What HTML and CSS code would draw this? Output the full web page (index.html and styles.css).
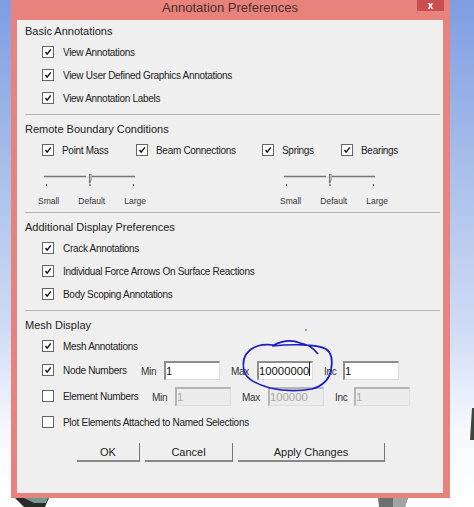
FILE: index.html
```html
<!DOCTYPE html>
<html lang="en">
<head>
    <meta charset="UTF-8">
    <meta name="viewport" content="width=device-width, initial-scale=1.0">
    <title>Annotation Preferences</title>
    <link rel="stylesheet" href="styles.css">
</head>
<body>
    <svg width="0" height="0" class="defs">
        <symbol id="tick" viewBox="0 0 12 12">
            <path d="M3 6 L5 8.6 L9.4 2.8" fill="none" stroke="#111" stroke-width="1.7"/>
        </symbol>
        <symbol id="slider" viewBox="0 0 92 16">
            <path d="M1 2.5 H43 M49 2.5 H92" stroke="#777" stroke-width="1.3"/>
            <path d="M48 0 V6 L47 9 H46.4 V0 Z" fill="#efefef" stroke="#666" stroke-width="0.9"/>
            <path d="M3.5 10 V12 M47 10 V12 M90.5 10 V12" stroke="#333" stroke-width="1"/>
        </symbol>
    </svg>

    <!-- desktop model peeking out from behind the dialog -->
    <svg class="backdrop" width="474" height="507">
        <path d="M15 498 H49 L45 507 H24 Z" fill="#2c2a28"/>
        <path d="M24 498 H48 L46 503 H34 Z" fill="#6f9a94"/>
        <path d="M378 498 H408 L405 507 H379 Z" fill="#6f6f6f"/>
        <path d="M393 498 H408 L405 507 H393 Z" fill="#a3a3a3"/>
        <path d="M472 408 H474 V440 H470 Z" fill="#3a4a38"/>
    </svg>

    <div class="window">
        <div class="titlebar">
            <span class="title">Annotation Preferences</span>
            <button class="close">x</button>
        </div>
        <div class="panel">
            <section class="group basic">
                <h4>Basic Annotations</h4>
                <label class="check"><span class="box"><svg><use href="#tick"/></svg></span>View Annotations</label>
                <label class="check"><span class="box"><svg><use href="#tick"/></svg></span>View User Defined Graphics Annotations</label>
                <label class="check"><span class="box"><svg><use href="#tick"/></svg></span>View Annotation Labels</label>
            </section>

            <section class="group boundary">
                <h4>Remote Boundary Conditions</h4>
                <div class="check-grid">
                    <label class="check"><span class="box"><svg><use href="#tick"/></svg></span>Point Mass</label>
                    <label class="check"><span class="box"><svg><use href="#tick"/></svg></span>Beam Connections</label>
                    <label class="check"><span class="box"><svg><use href="#tick"/></svg></span>Springs</label>
                    <label class="check"><span class="box"><svg><use href="#tick"/></svg></span>Bearings</label>
                </div>
                <div class="sliders">
                    <div class="slider">
                        <svg width="92" height="16"><use href="#slider"/></svg>
                        <div class="slider-labels"><span>Small</span><span>Default</span><span>Large</span></div>
                    </div>
                    <div class="slider second">
                        <svg width="92" height="16"><use href="#slider"/></svg>
                        <div class="slider-labels"><span>Small</span><span>Default</span><span>Large</span></div>
                    </div>
                </div>
            </section>

            <section class="group additional">
                <h4>Additional Display Preferences</h4>
                <label class="check"><span class="box"><svg><use href="#tick"/></svg></span>Crack Annotations</label>
                <label class="check"><span class="box"><svg><use href="#tick"/></svg></span>Individual Force Arrows On Surface Reactions</label>
                <label class="check"><span class="box"><svg><use href="#tick"/></svg></span>Body Scoping Annotations</label>
            </section>

            <section class="group mesh">
                <h4>Mesh Display</h4>
                <label class="check"><span class="box"><svg><use href="#tick"/></svg></span>Mesh Annotations</label>
                <div class="num-row node">
                    <label class="check"><span class="box"><svg><use href="#tick"/></svg></span>Node Numbers</label>
                    <span class="num-label">Min</span><input class="num" value="1">
                    <span class="num-label max">Max</span><input class="num" value="10000000">
                    <span class="num-label inc">Inc</span><input class="num" value="1">
                </div>
                <div class="num-row element">
                    <label class="check"><span class="box"></span>Element Numbers</label>
                    <span class="num-label">Min</span><input class="num" value="1" disabled>
                    <span class="num-label max">Max</span><input class="num" value="100000" disabled>
                    <span class="num-label inc">Inc</span><input class="num" value="1" disabled>
                </div>
                <label class="check plot"><span class="box"></span>Plot Elements Attached to Named Selections</label>
            </section>

            <div class="actions">
                <button class="btn ok">OK</button>
                <button class="btn cancel">Cancel</button>
                <button class="btn apply">Apply Changes</button>
            </div>
        </div>
    </div>

    <!-- hand drawn marker around the max field, plus the text caret inside it -->
    <svg class="marker" width="474" height="507">
        <path d="M309.5 362 V376" stroke="#222" stroke-width="1"/>
        <path d="M318 354 C313 347 306 344 300 343 C293 340 284 340 274 345 C266 344 256 345 250 350 C244 355 242 362 244 371 C247 380 257 384 270 388 C283 391 300 391 312 389 C322 386 329 381 331 370 C333 360 332 353 326 349 C316 344 292 344 272 346" fill="none" stroke="#1a1fc4" stroke-width="1.7"/>
        <circle cx="306" cy="330" r="0.8" fill="#1a1fc4"/>
    </svg>
</body>
</html>
```

FILE: styles.css
```css
html, body {
    height: 507px;
    overflow: hidden;
}
body {
    margin: 0;
    background: linear-gradient(#7f9de2 0, #a9bfea 170px, #cfdcf5 330px, #f6f8fe 430px, #ffffff 507px);
    font-family: "Liberation Sans", Arial, sans-serif;
    font-size: 10px;
    letter-spacing: -0.3px;
    color: #222;
}
.defs {
    position: absolute;
}
.backdrop, .marker {
    position: absolute;
    left: 0;
    top: 0;
}
.window {
    position: absolute;
    left: 11px;
    top: 0;
    width: 439px;
    height: 498px;
    background: #e8827c;
    box-sizing: border-box;
    padding: 0 7px 5px 6px;
    display: flex;
    flex-direction: column;
}
.titlebar {
    height: 20px;
    flex: none;
    display: flex;
    justify-content: center;
    position: relative;
}
.title {
    font-size: 13px;
    line-height: 15px;
    letter-spacing: 0;
    color: #4a2f2d;
}
.close {
    position: absolute;
    right: -1px;
    top: 0;
    width: 27px;
    height: 11px;
    border: none;
    padding: 0;
    background: #c74f4f;
    color: #fff;
    font: bold 10px/10px "Liberation Sans", sans-serif;
}
.panel {
    flex: 1;
    background: #efefef;
    padding: 0 3px 0 8px;
}
.group {
    border-bottom: 1px solid #b4b4b4;
    display: flex;
    flex-direction: column;
}
h4 {
    margin: 0;
    font-size: 11px;
    font-weight: normal;
    line-height: 15px;
    letter-spacing: 0;
    color: #222;
}
.check {
    display: flex;
    align-items: center;
    gap: 9px;
    height: 15px;
    white-space: nowrap;
}
.box {
    width: 12px;
    height: 12px;
    flex: none;
    box-sizing: border-box;
    border: 1px solid #666;
    background: #fff;
    display: block;
    margin-top: -1px;
}
.box svg {
    width: 10px;
    height: 10px;
    display: block;
}

.basic {
    padding-top: 4px;
    height: 95px;
    box-sizing: border-box;
}
.basic .check, .additional .check {
    margin: 0 0 8px 17px;
}
.basic h4, .additional h4 {
    margin-bottom: 6px;
}

.boundary {
    height: 98px;
    box-sizing: border-box;
    padding-top: 7px;
}
.boundary h4 {
    margin-bottom: 6px;
}
.check-grid {
    display: grid;
    grid-template-columns: 94px 126px 79px auto;
    margin-left: 17px;
}
.check-grid .check {
    gap: 8px;
}
.sliders {
    display: flex;
    gap: 134px;
    margin: 16px 0 0 13px;
}
.slider {
    width: 108px;
    display: flex;
    flex-direction: column;
}
.slider svg {
    display: block;
    margin-left: 5px;
}
.second svg {
    margin-left: 3px;
}
.slider-labels {
    display: flex;
    justify-content: space-between;
    font-size: 8.5px;
    line-height: 12px;
    letter-spacing: 0;
    margin-top: 5px;
    color: #333;
}

.additional {
    height: 98px;
    box-sizing: border-box;
    padding-top: 7px;
}

.mesh {
    border-bottom: none;
    padding-top: 7px;
}
.mesh h4 {
    margin-bottom: 6px;
}
.mesh > .check {
    margin-left: 17px;
}
.num-row {
    display: flex;
    align-items: center;
    margin: 7px 0 0 17px;
    height: 19px;
}
.element {
    margin-top: 7px;
}
.plot {
    margin-top: 9px;
}
.num-row .check {
    width: 99px;
}
.element .check {
    width: 110px;
}
.num-label {
    width: 23px;
    margin-top: 2px;
    color: #333;
}
.num-label.max {
    width: 26px;
}
.num-label.inc {
    width: 19px;
}
.num {
    width: 56px;
    height: 19px;
    box-sizing: border-box;
    border: 1px solid #ddd;
    border-top: 2px solid #8d8d8d;
    border-left: 2px solid #8d8d8d;
    background: #fff;
    padding: 0;
    margin: 0 11px 0 0;
    font-family: "Liberation Sans", sans-serif;
    font-size: 11.3px;
    color: #111;
    outline: none;
}
.num:disabled {
    background: #ececec;
    color: #a8a8a8;
    border-top-color: #b5b5b5;
    border-left-color: #b5b5b5;
}

.actions {
    display: flex;
    gap: 5px;
    margin: 13px 0 0 52px;
}
.btn {
    height: 19px;
    box-sizing: border-box;
    padding: 0;
    background: #efefef;
    border: none;
    border-right: 1px solid #777;
    border-bottom: 2px solid #888;
    font-family: "Liberation Sans", sans-serif;
    font-size: 11px;
    line-height: 16px;
    color: #222;
}
.ok {
    width: 63px;
}
.cancel {
    width: 88px;
}
.apply {
    width: 147px;
}
```
